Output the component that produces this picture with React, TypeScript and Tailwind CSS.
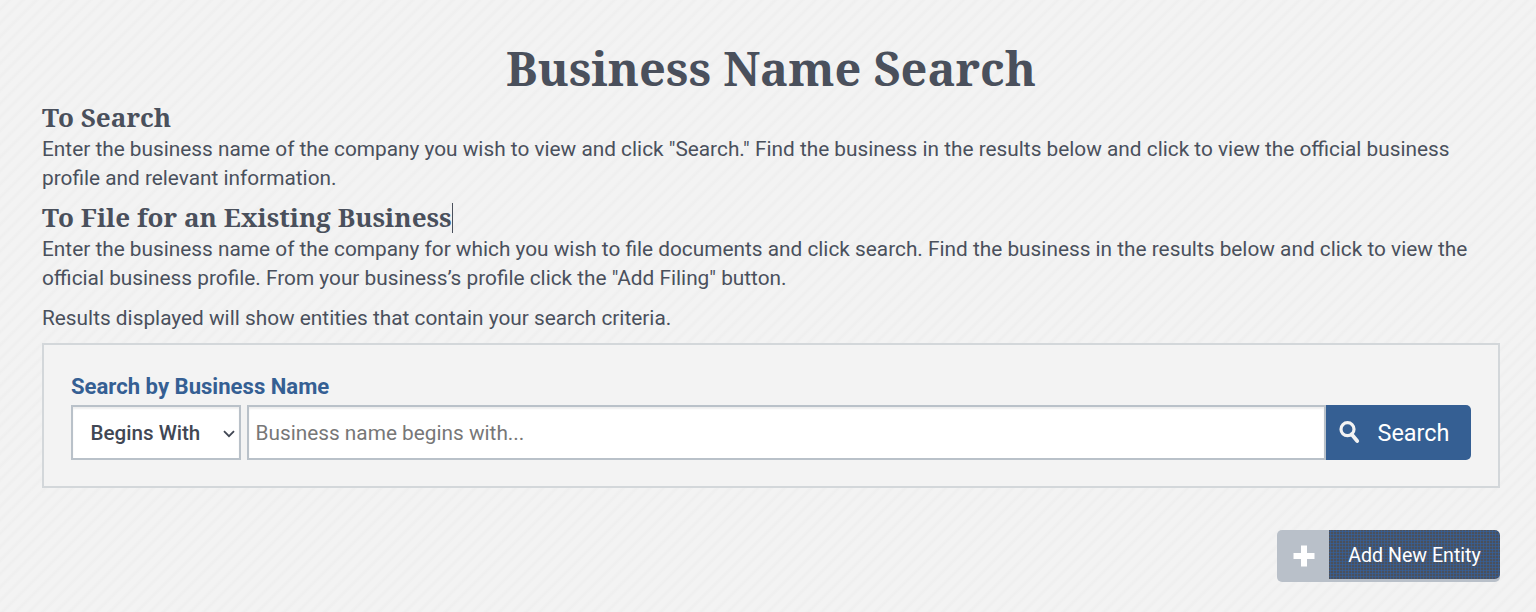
import type { ReactNode } from 'react'

interface SectionProps {
  title: string
  caret?: boolean
  children: ReactNode
}

function Section({ title, caret, children }: SectionProps) {
  return (
    <section className="mb-2">
      <h2 className="flex h-[33px] items-start font-['Noto_Serif','DejaVu_Serif',serif] text-[26.06px] leading-[30px] font-bold whitespace-nowrap">
        {title}
        {caret && <span className="mt-px h-[30px] w-px bg-[#4a505c]" />}
      </h2>
      <p className="text-[20.82px] leading-[29.4px] whitespace-nowrap">{children}</p>
    </section>
  )
}

function SearchIcon() {
  return (
    <svg className="-mt-0.5 h-6 w-6" viewBox="0 0 24 24" fill="none" stroke="#f3f3f3">
      <circle cx="8.5" cy="9.2" r="6.5" strokeWidth="3.2" />
      <path d="M12.6 14.2l5.6 6.8" strokeWidth="3.8" strokeLinecap="round" />
    </svg>
  )
}

function PlusIcon() {
  return (
    <svg className="h-[22px] w-[22px]" viewBox="0 0 22 22" fill="currentColor">
      <path d="M8 0.5h6v7.5h7.5v6H14v7.5H8V14H0.5V8H8z" />
    </svg>
  )
}

export default function App() {
  return (
    <main className="h-[612px] w-[1536px] overflow-hidden bg-[repeating-linear-gradient(135deg,#f3f3f3_0px,#f3f3f3_4px,#f0f0f0_6px,#efefef_7px,#f3f3f3_9.5px)] pt-[35px] pr-[36px] pl-[42px] font-[Roboto,sans-serif] text-[#4a505c]">
      <h1 className="h-[67px] text-center font-['Noto_Serif','DejaVu_Serif',serif] text-[46.9px] leading-[66px] font-bold whitespace-nowrap">
        Business Name Search
      </h1>

      <Section title="To Search">
        Enter the business name of the company you wish to view and click "Search." Find the business in the results below and click to view the official business
        <br />
        profile and relevant information.
      </Section>
      <Section title="To File for an Existing Business" caret>
        Enter the business name of the company for which you wish to file documents and click search. Find the business in the results below and click to view the
        <br />
        official business profile. From your business’s profile click the "Add Filing" button.
      </Section>
      <p className="h-[41.4px] text-[20.82px] leading-[32px]">Results displayed will show entities that contain your search criteria.</p>

      <form className="h-[145px] border-2 border-[#d3d7da] bg-[#f3f3f3] px-[27px] pt-[27.4px]">
        <label className="block text-[22.1px] leading-[28px] font-bold text-[#355f93]">Search by Business Name</label>
        <div className="mt-[5px] flex h-[54.5px]">
          <div className="flex w-[169.5px] items-center justify-between border-2 border-[#b9c1c9] bg-white pt-[2px] pr-[4px] pl-[17.5px] text-[20.6px] font-medium text-[#414754] shadow-[inset_0_2px_2px_#eeeeee]">
            Begins With
            <svg className="h-[8px] w-[12px]" viewBox="0 0 12 8" fill="none" stroke="currentColor" strokeWidth="1.8">
              <path d="M1 1.2l5 5 5-5" />
            </svg>
          </div>
          <div className="ml-[6px] flex w-[1079px] items-center border-2 border-[#b9c1c9] bg-white pt-[2px] pl-[7px] text-[20.8px] text-[#777777] shadow-[inset_0_2px_2px_#eeeeee]">
            Business name begins with...
          </div>
          <button type="button" className="flex w-[145.5px] items-center rounded-r-[5px] bg-[#355f93] pt-px pl-[13px] text-[23.4px] text-white">
            <SearchIcon />
            <span className="ml-[15px]">Search</span>
          </button>
        </div>
      </form>

      <div className="mt-[42px] flex justify-end">
        <button type="button" className="flex h-[51.5px] w-[223px] overflow-hidden rounded-[5px] bg-[#b9c0c9] text-white">
          <span className="flex h-full w-[52px] items-center justify-center pl-[2px]">
            <PlusIcon />
          </span>
          <span className="flex h-[49px] flex-1 items-center justify-center rounded-r-[5px] bg-[#4a505c] bg-[radial-gradient(circle,#355f98_0.9px,transparent_1.2px)] bg-size-[3px_3px] pt-[2px] text-[19.6px]">
            Add New Entity
          </span>
        </button>
      </div>
    </main>
  )
}
